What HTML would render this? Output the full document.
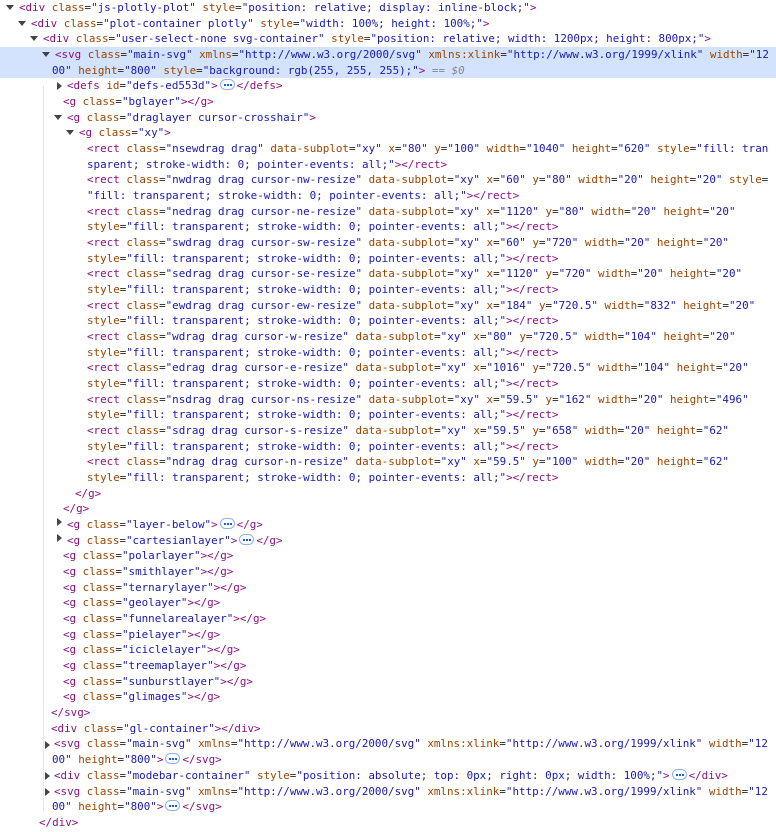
<!DOCTYPE html>
<html><head><meta charset="utf-8"><style>
html,body{margin:0;padding:0;background:#fff;width:776px;height:832px;overflow:hidden}
body{font-family:"DejaVu Sans Mono","Liberation Mono",monospace;font-size:10.89px;color:#222}
.l{position:absolute;white-space:pre;height:15.67px;line-height:15.67px}
.t{color:#881280}.a{color:#994500}.v{color:#1a1aa6}
.hl{position:absolute;left:0;top:47px;width:776px;height:31.4px;background:#d3e3fd}
.e{display:inline-block;border:1px solid #8fb0e8;border-radius:6px;vertical-align:-1px;margin:0 2px;position:relative;box-sizing:border-box;width:15px;height:11px}
.e::after{content:"";position:absolute;left:3px;top:4px;width:2px;height:2px;background:#1a5fd0;box-shadow:3px 0 0 #1a5fd0,6px 0 0 #1a5fd0}
.d,.r{position:absolute;width:0;height:0}
.d{border-left:4px solid transparent;border-right:4px solid transparent;border-top:5px solid #444}
.r{border-top:4px solid transparent;border-bottom:4px solid transparent;border-left:5px solid #444}
.s{color:#888;font-style:italic}
.g{position:absolute;left:43px;top:86px;width:1px;height:725px;background:#e6e6e6}
</style></head><body>
<div class="hl"></div>
<div class="g"></div>
<i class="d" style="left:6px;top:5px"></i>
<i class="d" style="left:18px;top:21px"></i>
<i class="d" style="left:30px;top:36px"></i>
<i class="d" style="left:42px;top:52px"></i>
<i class="r" style="left:57px;top:82px"></i>
<i class="d" style="left:54px;top:115px"></i>
<i class="d" style="left:66px;top:130px"></i>
<i class="r" style="left:57px;top:518px"></i>
<i class="r" style="left:57px;top:534px"></i>
<i class="r" style="left:45px;top:741px"></i>
<i class="r" style="left:45px;top:772px"></i>
<i class="r" style="left:45px;top:788px"></i>

<div class="l" style="left:19px;top:0px"><span class="t">&lt;div</span> <span class="a">class</span>=<span class="v">"js-plotly-plot"</span> <span class="a">style</span>=<span class="v">"position: relative; display: inline-block;"</span><span class="t">&gt;</span></div>
<div class="l" style="left:31px;top:15.67px"><span class="t">&lt;div</span> <span class="a">class</span>=<span class="v">"plot-container plotly"</span> <span class="a">style</span>=<span class="v">"width: 100%; height: 100%;"</span><span class="t">&gt;</span></div>
<div class="l" style="left:43px;top:31.34px"><span class="t">&lt;div</span> <span class="a">class</span>=<span class="v">"user-select-none svg-container"</span> <span class="a">style</span>=<span class="v">"position: relative; width: 1200px; height: 800px;"</span><span class="t">&gt;</span></div>
<div class="l" style="left:55px;top:47.01px"><span class="t">&lt;svg</span> <span class="a">class</span>=<span class="v">"main-svg"</span> <span class="a">xmlns</span>=<span class="v">"http://www.w3.org/2000/svg"</span> <span class="a">xmlns:xlink</span>=<span class="v">"http://www.w3.org/1999/xlink"</span> <span class="a">width</span>=<span class="v">"12</span></div>
<div class="l" style="left:52px;top:62.68px"><span class="v">00"</span> <span class="a">height</span>=<span class="v">"800"</span> <span class="a">style</span>=<span class="v">"background: rgb(255, 255, 255);"</span><span class="t">&gt;</span> <span class="s">== $0</span></div>
<div class="l" style="left:67px;top:78.35px"><span class="t">&lt;defs</span> <span class="a">id</span>=<span class="v">"defs-ed553d"</span><span class="t">&gt;</span><span class="e"></span><span class="t">&lt;/defs&gt;</span></div>
<div class="l" style="left:63px;top:94.02px"><span class="t">&lt;g</span> <span class="a">class</span>=<span class="v">"bglayer"</span><span class="t">&gt;&lt;/g&gt;</span></div>
<div class="l" style="left:67px;top:109.69px"><span class="t">&lt;g</span> <span class="a">class</span>=<span class="v">"draglayer cursor-crosshair"</span><span class="t">&gt;</span></div>
<div class="l" style="left:79px;top:125.36px"><span class="t">&lt;g</span> <span class="a">class</span>=<span class="v">"xy"</span><span class="t">&gt;</span></div>
<div class="l" style="left:87px;top:141.03px"><span class="t">&lt;rect</span> <span class="a">class</span>=<span class="v">"nsewdrag drag"</span> <span class="a">data-subplot</span>=<span class="v">"xy"</span> <span class="a">x</span>=<span class="v">"80"</span> <span class="a">y</span>=<span class="v">"100"</span> <span class="a">width</span>=<span class="v">"1040"</span> <span class="a">height</span>=<span class="v">"620"</span> <span class="a">style</span>=<span class="v">"fill: tran</span></div>
<div class="l" style="left:87px;top:156.7px"><span class="v">sparent; stroke-width: 0; pointer-events: all;"</span><span class="t">&gt;&lt;/rect&gt;</span></div>
<div class="l" style="left:87px;top:172.37px"><span class="t">&lt;rect</span> <span class="a">class</span>=<span class="v">"nwdrag drag cursor-nw-resize"</span> <span class="a">data-subplot</span>=<span class="v">"xy"</span> <span class="a">x</span>=<span class="v">"60"</span> <span class="a">y</span>=<span class="v">"80"</span> <span class="a">width</span>=<span class="v">"20"</span> <span class="a">height</span>=<span class="v">"20"</span> <span class="a">style</span>=</div>
<div class="l" style="left:87px;top:188.04px"><span class="v">"fill: transparent; stroke-width: 0; pointer-events: all;"</span><span class="t">&gt;&lt;/rect&gt;</span></div>
<div class="l" style="left:87px;top:203.71px"><span class="t">&lt;rect</span> <span class="a">class</span>=<span class="v">"nedrag drag cursor-ne-resize"</span> <span class="a">data-subplot</span>=<span class="v">"xy"</span> <span class="a">x</span>=<span class="v">"1120"</span> <span class="a">y</span>=<span class="v">"80"</span> <span class="a">width</span>=<span class="v">"20"</span> <span class="a">height</span>=<span class="v">"20"</span></div>
<div class="l" style="left:87px;top:219.38px"><span class="a">style</span>=<span class="v">"fill: transparent; stroke-width: 0; pointer-events: all;"</span><span class="t">&gt;&lt;/rect&gt;</span></div>
<div class="l" style="left:87px;top:235.05px"><span class="t">&lt;rect</span> <span class="a">class</span>=<span class="v">"swdrag drag cursor-sw-resize"</span> <span class="a">data-subplot</span>=<span class="v">"xy"</span> <span class="a">x</span>=<span class="v">"60"</span> <span class="a">y</span>=<span class="v">"720"</span> <span class="a">width</span>=<span class="v">"20"</span> <span class="a">height</span>=<span class="v">"20"</span></div>
<div class="l" style="left:87px;top:250.72px"><span class="a">style</span>=<span class="v">"fill: transparent; stroke-width: 0; pointer-events: all;"</span><span class="t">&gt;&lt;/rect&gt;</span></div>
<div class="l" style="left:87px;top:266.39px"><span class="t">&lt;rect</span> <span class="a">class</span>=<span class="v">"sedrag drag cursor-se-resize"</span> <span class="a">data-subplot</span>=<span class="v">"xy"</span> <span class="a">x</span>=<span class="v">"1120"</span> <span class="a">y</span>=<span class="v">"720"</span> <span class="a">width</span>=<span class="v">"20"</span> <span class="a">height</span>=<span class="v">"20"</span></div>
<div class="l" style="left:87px;top:282.06px"><span class="a">style</span>=<span class="v">"fill: transparent; stroke-width: 0; pointer-events: all;"</span><span class="t">&gt;&lt;/rect&gt;</span></div>
<div class="l" style="left:87px;top:297.73px"><span class="t">&lt;rect</span> <span class="a">class</span>=<span class="v">"ewdrag drag cursor-ew-resize"</span> <span class="a">data-subplot</span>=<span class="v">"xy"</span> <span class="a">x</span>=<span class="v">"184"</span> <span class="a">y</span>=<span class="v">"720.5"</span> <span class="a">width</span>=<span class="v">"832"</span> <span class="a">height</span>=<span class="v">"20"</span></div>
<div class="l" style="left:87px;top:313.4px"><span class="a">style</span>=<span class="v">"fill: transparent; stroke-width: 0; pointer-events: all;"</span><span class="t">&gt;&lt;/rect&gt;</span></div>
<div class="l" style="left:87px;top:329.07px"><span class="t">&lt;rect</span> <span class="a">class</span>=<span class="v">"wdrag drag cursor-w-resize"</span> <span class="a">data-subplot</span>=<span class="v">"xy"</span> <span class="a">x</span>=<span class="v">"80"</span> <span class="a">y</span>=<span class="v">"720.5"</span> <span class="a">width</span>=<span class="v">"104"</span> <span class="a">height</span>=<span class="v">"20"</span></div>
<div class="l" style="left:87px;top:344.74px"><span class="a">style</span>=<span class="v">"fill: transparent; stroke-width: 0; pointer-events: all;"</span><span class="t">&gt;&lt;/rect&gt;</span></div>
<div class="l" style="left:87px;top:360.41px"><span class="t">&lt;rect</span> <span class="a">class</span>=<span class="v">"edrag drag cursor-e-resize"</span> <span class="a">data-subplot</span>=<span class="v">"xy"</span> <span class="a">x</span>=<span class="v">"1016"</span> <span class="a">y</span>=<span class="v">"720.5"</span> <span class="a">width</span>=<span class="v">"104"</span> <span class="a">height</span>=<span class="v">"20"</span></div>
<div class="l" style="left:87px;top:376.08px"><span class="a">style</span>=<span class="v">"fill: transparent; stroke-width: 0; pointer-events: all;"</span><span class="t">&gt;&lt;/rect&gt;</span></div>
<div class="l" style="left:87px;top:391.75px"><span class="t">&lt;rect</span> <span class="a">class</span>=<span class="v">"nsdrag drag cursor-ns-resize"</span> <span class="a">data-subplot</span>=<span class="v">"xy"</span> <span class="a">x</span>=<span class="v">"59.5"</span> <span class="a">y</span>=<span class="v">"162"</span> <span class="a">width</span>=<span class="v">"20"</span> <span class="a">height</span>=<span class="v">"496"</span></div>
<div class="l" style="left:87px;top:407.42px"><span class="a">style</span>=<span class="v">"fill: transparent; stroke-width: 0; pointer-events: all;"</span><span class="t">&gt;&lt;/rect&gt;</span></div>
<div class="l" style="left:87px;top:423.09px"><span class="t">&lt;rect</span> <span class="a">class</span>=<span class="v">"sdrag drag cursor-s-resize"</span> <span class="a">data-subplot</span>=<span class="v">"xy"</span> <span class="a">x</span>=<span class="v">"59.5"</span> <span class="a">y</span>=<span class="v">"658"</span> <span class="a">width</span>=<span class="v">"20"</span> <span class="a">height</span>=<span class="v">"62"</span></div>
<div class="l" style="left:87px;top:438.76px"><span class="a">style</span>=<span class="v">"fill: transparent; stroke-width: 0; pointer-events: all;"</span><span class="t">&gt;&lt;/rect&gt;</span></div>
<div class="l" style="left:87px;top:454.43px"><span class="t">&lt;rect</span> <span class="a">class</span>=<span class="v">"ndrag drag cursor-n-resize"</span> <span class="a">data-subplot</span>=<span class="v">"xy"</span> <span class="a">x</span>=<span class="v">"59.5"</span> <span class="a">y</span>=<span class="v">"100"</span> <span class="a">width</span>=<span class="v">"20"</span> <span class="a">height</span>=<span class="v">"62"</span></div>
<div class="l" style="left:87px;top:470.1px"><span class="a">style</span>=<span class="v">"fill: transparent; stroke-width: 0; pointer-events: all;"</span><span class="t">&gt;&lt;/rect&gt;</span></div>
<div class="l" style="left:75px;top:485.77px"><span class="t">&lt;/g&gt;</span></div>
<div class="l" style="left:63px;top:501.44px"><span class="t">&lt;/g&gt;</span></div>
<div class="l" style="left:67px;top:517.11px"><span class="t">&lt;g</span> <span class="a">class</span>=<span class="v">"layer-below"</span><span class="t">&gt;</span><span class="e"></span><span class="t">&lt;/g&gt;</span></div>
<div class="l" style="left:67px;top:532.78px"><span class="t">&lt;g</span> <span class="a">class</span>=<span class="v">"cartesianlayer"</span><span class="t">&gt;</span><span class="e"></span><span class="t">&lt;/g&gt;</span></div>
<div class="l" style="left:63px;top:548.45px"><span class="t">&lt;g</span> <span class="a">class</span>=<span class="v">"polarlayer"</span><span class="t">&gt;&lt;/g&gt;</span></div>
<div class="l" style="left:63px;top:564.12px"><span class="t">&lt;g</span> <span class="a">class</span>=<span class="v">"smithlayer"</span><span class="t">&gt;&lt;/g&gt;</span></div>
<div class="l" style="left:63px;top:579.79px"><span class="t">&lt;g</span> <span class="a">class</span>=<span class="v">"ternarylayer"</span><span class="t">&gt;&lt;/g&gt;</span></div>
<div class="l" style="left:63px;top:595.46px"><span class="t">&lt;g</span> <span class="a">class</span>=<span class="v">"geolayer"</span><span class="t">&gt;&lt;/g&gt;</span></div>
<div class="l" style="left:63px;top:611.13px"><span class="t">&lt;g</span> <span class="a">class</span>=<span class="v">"funnelarealayer"</span><span class="t">&gt;&lt;/g&gt;</span></div>
<div class="l" style="left:63px;top:626.8px"><span class="t">&lt;g</span> <span class="a">class</span>=<span class="v">"pielayer"</span><span class="t">&gt;&lt;/g&gt;</span></div>
<div class="l" style="left:63px;top:642.47px"><span class="t">&lt;g</span> <span class="a">class</span>=<span class="v">"iciclelayer"</span><span class="t">&gt;&lt;/g&gt;</span></div>
<div class="l" style="left:63px;top:658.14px"><span class="t">&lt;g</span> <span class="a">class</span>=<span class="v">"treemaplayer"</span><span class="t">&gt;&lt;/g&gt;</span></div>
<div class="l" style="left:63px;top:673.81px"><span class="t">&lt;g</span> <span class="a">class</span>=<span class="v">"sunburstlayer"</span><span class="t">&gt;&lt;/g&gt;</span></div>
<div class="l" style="left:63px;top:689.48px"><span class="t">&lt;g</span> <span class="a">class</span>=<span class="v">"glimages"</span><span class="t">&gt;&lt;/g&gt;</span></div>
<div class="l" style="left:51px;top:705.15px"><span class="t">&lt;/svg&gt;</span></div>
<div class="l" style="left:51px;top:720.82px"><span class="t">&lt;div</span> <span class="a">class</span>=<span class="v">"gl-container"</span><span class="t">&gt;&lt;/div&gt;</span></div>
<div class="l" style="left:54px;top:736.49px"><span class="t">&lt;svg</span> <span class="a">class</span>=<span class="v">"main-svg"</span> <span class="a">xmlns</span>=<span class="v">"http://www.w3.org/2000/svg"</span> <span class="a">xmlns:xlink</span>=<span class="v">"http://www.w3.org/1999/xlink"</span> <span class="a">width</span>=<span class="v">"12</span></div>
<div class="l" style="left:52px;top:752.16px"><span class="v">00"</span> <span class="a">height</span>=<span class="v">"800"</span><span class="t">&gt;</span><span class="e"></span><span class="t">&lt;/svg&gt;</span></div>
<div class="l" style="left:54px;top:767.83px"><span class="t">&lt;div</span> <span class="a">class</span>=<span class="v">"modebar-container"</span> <span class="a">style</span>=<span class="v">"position: absolute; top: 0px; right: 0px; width: 100%;"</span><span class="t">&gt;</span><span class="e"></span><span class="t">&lt;/div&gt;</span></div>
<div class="l" style="left:54px;top:783.5px"><span class="t">&lt;svg</span> <span class="a">class</span>=<span class="v">"main-svg"</span> <span class="a">xmlns</span>=<span class="v">"http://www.w3.org/2000/svg"</span> <span class="a">xmlns:xlink</span>=<span class="v">"http://www.w3.org/1999/xlink"</span> <span class="a">width</span>=<span class="v">"12</span></div>
<div class="l" style="left:52px;top:799.17px"><span class="v">00"</span> <span class="a">height</span>=<span class="v">"800"</span><span class="t">&gt;</span><span class="e"></span><span class="t">&lt;/svg&gt;</span></div>
<div class="l" style="left:39px;top:814.84px"><span class="t">&lt;/div&gt;</span></div>
</body></html>
